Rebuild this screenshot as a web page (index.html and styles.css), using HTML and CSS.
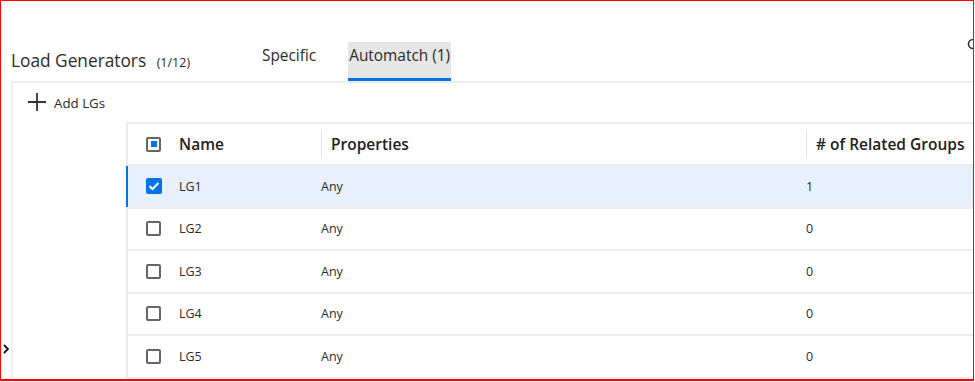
FILE: index.html
```html
<!DOCTYPE html>
<html>
<head>
<meta charset="utf-8">
<link rel="stylesheet" href="styles.css">
</head>
<body>
<div class="frame">
  <svg class="search" width="14" height="14" viewBox="0 0 14 14"><circle cx="7" cy="6" r="4.5" fill="none" stroke="#333" stroke-width="1.6"/></svg>
  <svg class="chev" width="6" height="10" viewBox="0 0 6 10"><path d="M1 1 L5 5 L1 9" fill="none" stroke="#111" stroke-width="1.8"/></svg>
  <div class="topbar">
    <div class="title">Load Generators <span class="count">(1/12)</span></div>
    <div class="tabs">
      <div class="tab">Specific</div>
      <div class="tab active">Automatch (1)</div>
    </div>
  </div>
  <div class="panel">
    <div class="toolbar">
      <svg class="plus" width="18" height="18" viewBox="0 0 18 18"><path d="M9 0 V18 M0 9 H18" stroke="#333" stroke-width="1.8"/></svg>
      <span>Add LGs</span>
    </div>
    <div class="table">
      <div class="row head">
        <div class="cell chk"><span class="cb partial"></span></div>
        <div class="cell">Name</div>
        <div class="cell sep">Properties</div>
        <div class="cell sep">#&nbsp;of Related Groups</div>
      </div>
      <div class="row selected">
        <div class="cell chk"><span class="cb checked"><svg width="12" height="10" viewBox="0 0 12 10"><path d="M1.5 5 L4.5 8 L10.5 2" fill="none" stroke="#fff" stroke-width="2"/></svg></span></div>
        <div class="cell">LG1</div>
        <div class="cell">Any</div>
        <div class="cell">1</div>
      </div>
      <div class="row">
        <div class="cell chk"><span class="cb"></span></div>
        <div class="cell">LG2</div>
        <div class="cell">Any</div>
        <div class="cell">0</div>
      </div>
      <div class="row">
        <div class="cell chk"><span class="cb"></span></div>
        <div class="cell">LG3</div>
        <div class="cell">Any</div>
        <div class="cell">0</div>
      </div>
      <div class="row">
        <div class="cell chk"><span class="cb"></span></div>
        <div class="cell">LG4</div>
        <div class="cell">Any</div>
        <div class="cell">0</div>
      </div>
      <div class="row">
        <div class="cell chk"><span class="cb"></span></div>
        <div class="cell">LG5</div>
        <div class="cell">Any</div>
        <div class="cell">0</div>
      </div>
    </div>
  </div>
</div>
</body>
</html>
```
FILE: styles.css
```css
* { box-sizing: border-box; }
html, body { margin: 0; padding: 0; background: #fff; }
body { font-family: "Open Sans", "Noto Sans", sans-serif; color: #333; width: 975px; height: 382px; overflow: hidden; }
.frame {
  position: relative;
  width: 974px;
  height: 381px;
  border: 1px solid #ff0000;
  border-bottom-width: 2px;
  overflow: hidden;
}
.search { position: absolute; left: 965px; top: 37px; }
.chev { position: absolute; left: 2px; top: 343px; }
.topbar {
  height: 80px;
  display: flex;
  align-items: flex-end;
  padding-left: 10px;
}
.title {
  font-size: 17.3px;
  color: #2b2b2b;
  padding-bottom: 9px;
  width: 251px;
}
.count { font-size: 12.5px; margin-left: 6px; }
.tabs { display: flex; gap: 32px; }
.tab {
  font-size: 15.4px;
  color: #2b2b2b;
  height: 39px;
  padding: 3px 0 0;
  line-height: 22px;
}
.tab.active {
  background: #e6e6e6;
  border-bottom: 3px solid #0073e7;
  padding: 3px 1px 0;
}
.panel {
  margin-left: 10px;
  border-top: 2px solid #ececec;
  border-left: 2px solid #f0f0f0;
}
.toolbar {
  height: 39px;
  display: flex;
  align-items: center;
  padding-left: 15px;
  font-size: 13.3px;
  color: #2b2b2b;
  gap: 8px;
}
.plus { margin-top: -1px; }
.table {
  margin-left: 113px;
  border-left: 2px solid #ececec;
  border-top: 2px solid #ececec;
}
.row {
  display: grid;
  grid-template-columns: 51px 142px 485px 1fr;
  height: 42.5px;
  align-items: center;
  border-bottom: 2px solid #ececec;
  font-size: 12.5px;
  color: #2b2b2b;
}
.row.head {
  height: 42px;
  font-size: 15.5px;
  font-weight: 600;
  color: #222;
}
.row.selected {
  background: #e7f0fb;
  box-shadow: inset 2px 0 0 #0073e7;
  margin-left: -2px;
  padding-left: 2px;
}
.cell { white-space: nowrap; }
.cell.chk { padding-left: 18px; display: flex; align-items: center; }
.cell.sep {
  border-left: 1px solid #e2e2e2;
  padding-left: 9px;
  height: 28px;
  line-height: 28px;
}
.cb {
  display: inline-flex;
  align-items: center;
  justify-content: center;
  width: 15px;
  height: 15px;
  border: 2px solid #666;
  border-radius: 2px;
  background: #fff;
}
.cb.partial::after {
  content: "";
  width: 6px;
  height: 6px;
  background: #0073e7;
}
.cb.checked {
  width: 16px;
  height: 16px;
  background: #0073e7;
  border-color: #0073e7;
}
```
